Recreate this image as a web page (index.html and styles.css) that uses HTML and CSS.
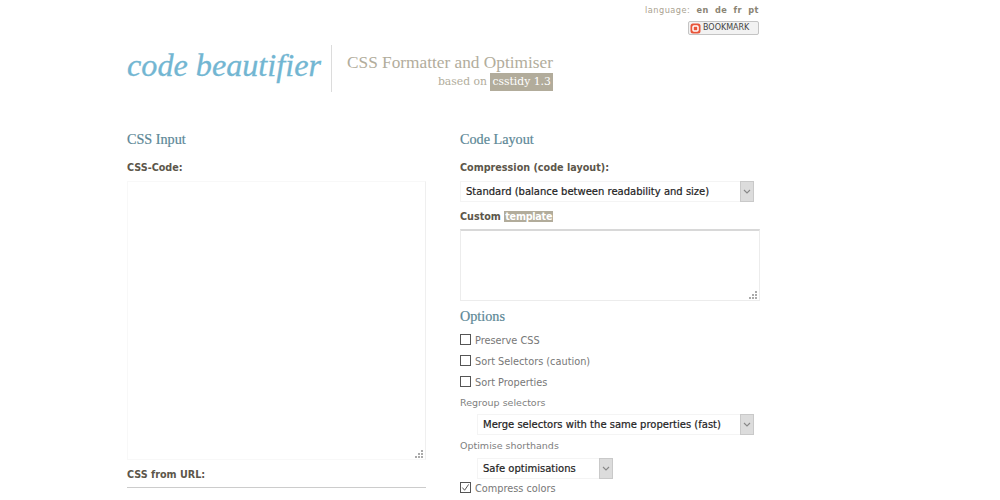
FILE: index.html
```html
<!DOCTYPE html>
<html lang="en">
<head>
<meta charset="utf-8">
<title>code beautifier</title>
<link rel="stylesheet" href="styles.css">
</head>
<body>
<div class="page">
  <div class="top">
    <div class="langs">language: <b>en</b> <b>de</b> <b>fr</b> <b>pt</b></div>
    <div class="bookmark">
      <svg class="bm-icon" width="11" height="11" viewBox="0 0 11 11"><rect x="0.5" y="0.5" width="10" height="10" rx="2.5" fill="#e8553a"/><rect x="3" y="3" width="5" height="5" rx="1" fill="none" stroke="#fff" stroke-width="1.5"/></svg>
      <span class="bm-text">BOOKMARK</span>
    </div>
  </div>
  <header class="brand">
    <h1 class="logo">code beautifier</h1>
    <div class="tagline">
      <div class="tag-main">CSS Formatter and Optimiser</div>
      <div class="tag-sub">based on <span class="tag-chip">csstidy 1.3</span></div>
    </div>
  </header>
  <main class="columns">
    <section class="col-left">
      <h2 class="heading">CSS Input</h2>
      <label class="field-label label-code">CSS-Code:</label>
      <textarea class="code-area"></textarea>
      <label class="field-label label-url">CSS from URL:</label>
      <div class="url-line"></div>
    </section>
    <section class="col-right">
      <h2 class="heading">Code Layout</h2>
      <label class="field-label label-code">Compression (code layout):</label>
      <div class="select sel-wide">
        <span class="sel-text">Standard (balance between readability and size)</span>
        <span class="sel-arrow"><svg width="8" height="5" viewBox="0 0 8 5"><path d="M1 1l3 3 3-3" fill="none" stroke="#888" stroke-width="1.1"/></svg></span>
      </div>
      <label class="field-label label-custom">Custom <span class="chip">template</span></label>
      <textarea class="tpl-area"></textarea>
      <h2 class="heading heading-options">Options</h2>
      <div class="check check-first"><span class="box"></span>Preserve CSS</div>
      <div class="check"><span class="box"></span>Sort Selectors (caution)</div>
      <div class="check"><span class="box"></span>Sort Properties</div>
      <div class="opt-label opt-regroup">Regroup selectors</div>
      <div class="select sel-indent sel-merge">
        <span class="sel-text">Merge selectors with the same properties (fast)</span>
        <span class="sel-arrow"><svg width="8" height="5" viewBox="0 0 8 5"><path d="M1 1l3 3 3-3" fill="none" stroke="#888" stroke-width="1.1"/></svg></span>
      </div>
      <div class="opt-label">Optimise shorthands</div>
      <div class="select sel-indent sel-safe">
        <span class="sel-text">Safe optimisations</span>
        <span class="sel-arrow"><svg width="8" height="5" viewBox="0 0 8 5"><path d="M1 1l3 3 3-3" fill="none" stroke="#888" stroke-width="1.1"/></svg></span>
      </div>
      <div class="check check-last"><span class="box"><svg width="10" height="10" viewBox="0 0 10 10"><path d="M1.5 4.5l2.5 3L8.500 1" fill="none" stroke="#555" stroke-width="1.1"/></svg></span>Compress colors</div>
    </section>
  </main>
</div>
</body>
</html>
```
FILE: styles.css
```css
html, body {
  margin: 0;
  height: 500px;
  overflow: hidden;
  background: #fff;
}
body {
  font-family: "DejaVu Sans", sans-serif;
  font-size: 10px;
  color: #555;
}
.page {
  width: 633px;
  margin-left: 127px;
}
.top {
  display: flex;
  flex-direction: column;
  align-items: flex-end;
  height: 45px;
  padding-right: 1px;
}
.langs {
  margin-top: 5px;
  height: 11px;
  line-height: 11px;
  font-size: 8.2px;
  letter-spacing: 0.5px;
  color: #aaa28f;
}
.langs b {
  font-weight: bold;
  color: #8a8474;
  margin-left: 3px;
}
.bookmark {
  margin-top: 5px;
  width: 68px;
  height: 12px;
  border: 1px solid #c4c4c4;
  border-radius: 2px;
  background: #f2f2f2;
  display: flex;
  align-items: center;
  padding-left: 1px;
  gap: 2px;
}
.bm-text {
  font-size: 8px;
  color: #444;
  line-height: 12px;
}
.brand {
  display: flex;
  height: 47px;
}
.logo {
  margin: 0;
  width: 204px;
  font-family: "Liberation Serif", serif;
  font-style: italic;
  font-weight: normal;
  font-size: 32.2px;
  line-height: 41px;
  color: #72b6d2;
  white-space: nowrap;
  border-right: 1px solid #dcdcdc;
  -webkit-text-stroke: 0.3px #72b6d2;
}
.tagline {
  margin-left: 15px;
  display: flex;
  flex-direction: column;
  align-items: flex-end;
  padding-top: 8px;
  font-family: "DejaVu Serif", serif;
  color: #b2ad9c;
}
.tag-main {
  font-family: "Liberation Serif", serif;
  font-size: 17.3px;
  line-height: 19px;
  white-space: nowrap;
}
.tag-sub {
  font-size: 10.8px;
  line-height: 18px;
  margin-top: 1px;
  white-space: nowrap;
}
.tag-chip {
  display: inline-block;
  background: #b2ac9b;
  color: #fff;
  padding: 0 2px;
}
.columns {
  display: grid;
  grid-template-columns: 299px 300px;
  column-gap: 34px;
  margin-top: 39px;
}
.heading {
  margin: 0;
  font-family: "Liberation Serif", serif;
  font-weight: normal;
  font-size: 14.2px;
  line-height: 16px;
  color: #5c8796;
  -webkit-text-stroke: 0.2px #5c8796;
}
.field-label {
  display: block;
  font-weight: bold;
  font-size: 9.65px;
  line-height: 12px;
  color: #5c564a;
}
.label-code {
  margin-top: 15px;
}
.code-area {
  display: block;
  box-sizing: border-box;
  width: 299px;
  height: 279px;
  margin: 7px 0 0;
  border: 1px solid #f8f8f8;
  border-right-color: #efefef;
  padding: 0;
  outline: none;
}
.label-url {
  margin-top: 9px;
}
.url-line {
  margin-top: 6px;
  height: 1px;
  background: #ccc;
}
textarea::-webkit-resizer {
  background: url("data:image/svg+xml,%3Csvg xmlns='http://www.w3.org/2000/svg' width='15' height='15'%3E%3Cg fill='%23aaa'%3E%3Crect x='11' y='6' width='2' height='2'/%3E%3Crect x='8' y='9' width='2' height='2'/%3E%3Crect x='11' y='9' width='2' height='2'/%3E%3Crect x='5' y='12' width='2' height='2'/%3E%3Crect x='8' y='12' width='2' height='2'/%3E%3Crect x='11' y='12' width='2' height='2'/%3E%3C/g%3E%3C/svg%3E") no-repeat;
}
.select {
  display: flex;
  justify-content: space-between;
  height: 21px;
  box-sizing: border-box;
  border-top: 1px solid #f4f4f4;
  border-bottom: 1px solid #f4f4f4;
  border-left: 1px solid #f4f4f4;
}
.sel-wide {
  margin-top: 7px;
  width: 294px;
}
.sel-text {
  font-size: 10px;
  line-height: 19px;
  color: #222;
  padding-left: 5px;
  white-space: nowrap;
  -webkit-text-stroke: 0.2px #222;
}
.sel-arrow {
  width: 14px;
  height: 21px;
  margin-top: -1px;
  background: #dcdcdc;
  border: 1px solid #c9c9c9;
  box-sizing: border-box;
  display: flex;
  align-items: center;
  justify-content: center;
}
.label-custom {
  margin-top: 9px;
}
.chip {
  background: #b2ac9b;
  color: #fff;
  padding: 0 1px;
  letter-spacing: -0.25px;
}
.tpl-area {
  display: block;
  box-sizing: border-box;
  width: 300px;
  height: 72px;
  margin: 6px 0 0;
  border: 1px solid #ececec;
  border-top: 2px solid #d8d8d8;
  padding: 0;
  outline: none;
}
.heading-options {
  margin-top: 7px;
}
.check {
  display: flex;
  align-items: center;
  height: 21px;
  font-size: 9.75px;
  color: #777;
}
.check-first {
  margin-top: 6px;
}
.box {
  width: 11px;
  height: 11px;
  border: 1px solid #555;
  box-sizing: border-box;
  margin-right: 4px;
  margin-top: -2px;
  display: flex;
}
.opt-label {
  font-size: 9.5px;
  line-height: 13px;
  color: #808080;
}
.opt-regroup {
  margin-top: 3px;
}
.sel-indent {
  margin-left: 17px;
  margin-top: 5px;
  margin-bottom: 4px;
}
.sel-merge {
  width: 277px;
}
.sel-safe {
  width: 136px;
  margin-top: 6px;
  margin-bottom: 0;
}
.check-last {
  height: 18px;
}
```
